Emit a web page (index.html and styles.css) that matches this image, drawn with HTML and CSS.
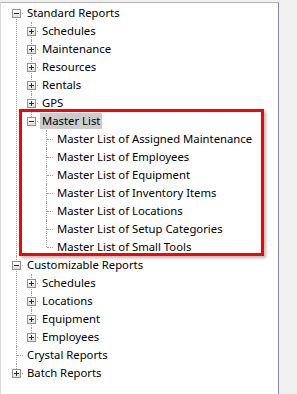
FILE: index.html
```
<!DOCTYPE html>
<html>
<head>
 <title>Reports</title>
 <link rel="stylesheet" href="styles.css">
</head>
<body>
 <div class="panel">
  <ul class="tree">
   <li class="open first">
    <span class="box minus"></span><span class="label">Standard Reports</span>
    <ul>
     <li><span class="box"></span><span class="label">Schedules</span></li>
     <li><span class="box"></span><span class="label">Maintenance</span></li>
     <li><span class="box"></span><span class="label">Resources</span></li>
     <li><span class="box"></span><span class="label">Rentals</span></li>
     <li><span class="box"></span><span class="label">GPS</span></li>
     <li class="open last marked">
      <span class="box minus"></span><span class="label selected">Master List</span>
      <ul>
       <li class="leaf"><span class="label">Master List of Assigned Maintenance</span></li>
       <li class="leaf"><span class="label">Master List of Employees</span></li>
       <li class="leaf"><span class="label">Master List of Equipment</span></li>
       <li class="leaf"><span class="label">Master List of Inventory Items</span></li>
       <li class="leaf"><span class="label">Master List of Locations</span></li>
       <li class="leaf"><span class="label">Master List of Setup Categories</span></li>
       <li class="leaf last"><span class="label">Master List of Small Tools</span></li>
      </ul>
      <div class="redbox"></div>
     </li>
    </ul>
   </li>
   <li class="open">
    <span class="box minus"></span><span class="label">Customizable Reports</span>
    <ul>
     <li><span class="box"></span><span class="label">Schedules</span></li>
     <li><span class="box"></span><span class="label">Locations</span></li>
     <li><span class="box"></span><span class="label">Equipment</span></li>
     <li class="last"><span class="box"></span><span class="label">Employees</span></li>
    </ul>
   </li>
   <li class="leaf"><span class="label">Crystal Reports</span></li>
   <li class="last"><span class="box"></span><span class="label">Batch Reports</span></li>
  </ul>
 </div>
</body>
</html>
```
FILE: styles.css
```
html, body{margin:0;padding:0;}
body{background:#f0f0f0;font-family:"Noto Sans","Liberation Sans",sans-serif;font-size:11.3px;color:#000;}

.panel{width:279px;height:400px;margin-top:2px;background:#fff;border-top:1px solid #b4b4b4;border-left:1px solid #dcdcdc;border-right:1px solid #828790;padding:1px 0 0 8px;box-sizing:border-box;}

.tree, .tree ul{list-style:none;margin:0;padding:0;}
.tree li{position:relative;padding-left:15px;}
.tree li::before{content:"";position:absolute;left:7px;top:0;bottom:0;border-left:1px dotted #a0a0a0;}
.tree li.first::before{top:9px;}
.tree li.last::before{bottom:auto;height:9px;}
.tree li::after{content:"";position:absolute;left:8px;top:9px;width:6px;border-top:1px dotted #a0a0a0;}

.label{display:inline-block;height:16px;line-height:16px;margin:1px 0 1px 1px;padding:0 2px;white-space:nowrap;}
.label.selected{background:#cccccc;}

.box{position:absolute;left:3px;top:5px;width:9px;height:9px;box-sizing:border-box;border:1px solid #919191;background:linear-gradient(#fff,#dedede);z-index:2;}
.box::before{content:"";position:absolute;left:1px;top:3px;width:5px;height:1px;background:#2b2b2b;}
.box::after{content:"";position:absolute;left:3px;top:1px;width:1px;height:5px;background:#2b2b2b;}
.box.minus::after{display:none;}

.redbox{position:absolute;left:-5px;top:-3px;bottom:0;width:245px;border:3px solid #ff0000;box-shadow:2px 2px 3px rgba(0,0,0,0.28);box-sizing:border-box;pointer-events:none;}
```
